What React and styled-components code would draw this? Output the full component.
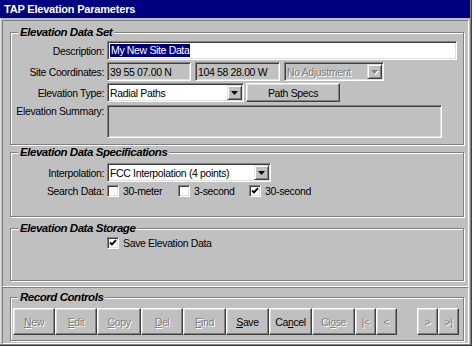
import React from "react";
import styled, { createGlobalStyle } from "styled-components";

const GlobalStyle = createGlobalStyle`
  html, body {
    margin: 0;
    padding: 0;
    background: #ffffff;
  }
  body {
    font-family: "Liberation Sans", Arial, sans-serif;
  }
`;

const Window = styled.div`
  width: 472px;
  height: 346px;
  box-sizing: border-box;
  background: #c0c0c0;
  border-right: 1px solid #404040;
  border-bottom: 1px solid #404040;
  box-shadow: inset -1px -1px 0 #808080, inset 1px 0 0 #dfdfdf;
  display: flex;
  flex-direction: column;
`;

const TitleBar = styled.div`
  height: 18px;
  flex: none;
  background: #000080;
  color: #ffffff;
  font-weight: bold;
  font-size: 11px;
  letter-spacing: -0.2px;
  display: flex;
  align-items: center;
  padding-left: 4px;
  margin-right: 1px;
`;

const Body = styled.div`
  flex: 1;
  padding: 2px 2px 1px 2px;
  display: flex;
  flex-direction: column;
`;

const Panel = styled.div`
  box-sizing: border-box;
  height: ${(p) => p.$h}px;
  border: 1px solid;
  border-color: #808080 #ffffff #ffffff #808080;
  padding: 0 4px 0 7px;
  display: flex;
  flex-direction: column;
`;

const Group = styled.div`
  position: relative;
  box-sizing: border-box;
  height: ${(p) => p.$h}px;
  margin-top: ${(p) => p.$mt}px;
  border: 1px solid #808080;
  box-shadow: inset 1px 1px 0 #ffffff, 1px 1px 0 #ffffff;
  padding-top: ${(p) => p.$pt}px;
`;

const Legend = styled.span`
  position: absolute;
  top: -7px;
  left: 7px;
  padding: 0 2px;
  background: #c0c0c0;
  font-weight: bold;
  font-style: italic;
  font-size: 11.5px;
  letter-spacing: -0.45px;
  line-height: 12px;
  color: #000000;
  white-space: nowrap;
`;

const Form = styled.div`
  display: grid;
  grid-template-columns: 93px auto;
  column-gap: 3px;
  row-gap: ${(p) => p.$gap ?? 2}px;
  align-items: center;
`;

const Label = styled.div`
  font-size: 10.5px;
  letter-spacing: -0.35px;
  text-align: right;
  white-space: nowrap;
  color: #000000;
  align-self: ${(p) => (p.$top ? "start" : "center")};
  padding-top: ${(p) => (p.$top ? 1 : 0)}px;
`;

const Row = styled.div`
  display: flex;
  align-items: center;
  gap: ${(p) => p.$gap ?? 4}px;
`;

const Field = styled.div`
  box-sizing: border-box;
  width: ${(p) => p.$w}px;
  height: ${(p) => p.$h ?? 19}px;
  margin-top: ${(p) => p.$mt ?? 0}px;
  background: ${(p) => (p.$readonly ? "#c0c0c0" : "#ffffff")};
  border: 1px solid;
  border-color: #808080 #ffffff #ffffff #808080;
  box-shadow: inset 1px 1px 0 #404040, inset -1px -1px 0 #dfdfdf;
  padding: 0 1px 0 2px;
  font-size: 10.5px;
  letter-spacing: -0.35px;
  display: flex;
  align-items: center;
  color: ${(p) => (p.$disabled ? "#808080" : "#000000")};
  text-shadow: ${(p) => (p.$disabled ? "1px 1px 0 #ffffff" : "none")};
  white-space: nowrap;
  overflow: hidden;
`;

const Selected = styled.span`
  background: #000080;
  color: #ffffff;
  padding: 0 1px;
  line-height: 13px;
`;

const DropButton = styled.div`
  margin-left: auto;
  flex: none;
  width: 15px;
  height: 15px;
  box-sizing: border-box;
  background: #c0c0c0;
  border: 1px solid;
  border-color: #dfdfdf #404040 #404040 #dfdfdf;
  box-shadow: inset 1px 1px 0 #ffffff, inset -1px -1px 0 #808080;
  display: flex;
  align-items: center;
  justify-content: center;
`;

const Button = styled.button`
  box-sizing: border-box;
  flex: none;
  width: ${(p) => p.$w}px;
  height: ${(p) => p.$h ?? 27}px;
  margin-left: ${(p) => p.$gap ?? 0}px;
  background: #c0c0c0;
  border: 1px solid;
  border-color: #ffffff #404040 #404040 #ffffff;
  box-shadow: inset -1px -1px 0 #808080, inset 1px 1px 0 #dfdfdf;
  font-family: inherit;
  font-size: 10.5px;
  letter-spacing: -0.35px;
  padding: 0;
  color: ${(p) => (p.disabled ? "#808080" : "#000000")};
  text-shadow: ${(p) => (p.disabled ? "1px 1px 0 #ffffff" : "none")};
  cursor: default;

  u {
    text-underline-offset: 1px;
  }
`;

const CheckItem = styled.label`
  display: flex;
  align-items: center;
  gap: 4px;
  width: ${(p) => p.$w ?? 71}px;
  font-size: 10.5px;
  letter-spacing: -0.35px;
  color: #000000;
`;

const Box = styled.span`
  width: 12px;
  height: 12px;
  flex: none;
  box-sizing: border-box;
  background: #ffffff;
  border: 1px solid;
  border-color: #808080 #ffffff #ffffff #808080;
  box-shadow: inset 1px 1px 0 #404040, inset -1px -1px 0 #dfdfdf;
  display: flex;
  align-items: center;
  justify-content: center;
`;

const ButtonBar = styled.div`
  display: flex;
  padding-left: 2px;
`;

const Arrow = ({ disabled }) => (
  <svg width="7" height="4" viewBox="0 0 7 4" style={{ overflow: "visible" }}>
    {disabled && <polygon points="1,1 8,1 4.5,5" fill="#ffffff" />}
    <polygon points="0,0 7,0 3.5,4" fill={disabled ? "#808080" : "#000000"} />
  </svg>
);

const Select = ({ w, value, disabled }) => (
  <Field $w={w} $disabled={disabled} $readonly={disabled}>
    {value}
    <DropButton>
      <Arrow disabled={disabled} />
    </DropButton>
  </Field>
);

const Check = ({ checked, label, w }) => (
  <CheckItem $w={w}>
    <Box>
      {checked && (
        <svg width="8" height="8" viewBox="0 0 8 8">
          <polyline points="1,3.5 3,5.5 7,1.2" fill="none" stroke="#000" strokeWidth="1.9" />
        </svg>
      )}
    </Box>
    {label}
  </CheckItem>
);

const records = [
  { w: 42, text: "New", u: 0, disabled: true },
  { w: 42, text: "Edit", u: 0, disabled: true },
  { w: 44, text: "Copy", u: 0, disabled: true },
  { w: 42, text: "Del", u: 0, disabled: true },
  { w: 43, text: "Find", u: 0, disabled: true },
  { w: 43, text: "Save", u: 0, disabled: false },
  { w: 43, text: "Cancel", u: 2, disabled: false },
  { w: 43, text: "Close", u: 2, disabled: true },
  { w: 21, text: "|<", disabled: true },
  { w: 21, text: "<", disabled: true },
  { w: 21, text: ">", disabled: true, gap: 20 },
  { w: 21, text: ">|", disabled: true },
];

const Mnemonic = ({ text, u }) => {
  if (u === undefined) return text;
  return (
    <>
      {text.slice(0, u)}
      <u>{text[u]}</u>
      {text.slice(u + 1)}
    </>
  );
};

export default function App() {
  return (
    <>
      <GlobalStyle />
      <Window>
        <TitleBar>TAP Elevation Parameters</TitleBar>
        <Body>
          <Panel $h={267}>
            <Group $h={113} $mt={11} $pt={8}>
              <Legend>Elevation Data Set</Legend>
              <Form>
                <Label>Description:</Label>
                <Field $w={350}>
                  <Selected>My New Site Data</Selected>
                </Field>

                <Label>Site Coordinates:</Label>
                <Row>
                  <Field $w={84} $readonly>
                    39 55 07.00 N
                  </Field>
                  <Field $w={85} $readonly>
                    104 58 28.00 W
                  </Field>
                  <Select w={100} value="No Adjustment" disabled />
                </Row>

                <Label>Elevation Type:</Label>
                <Row $gap={2}>
                  <Select w={137} value="Radial Paths" />
                  <Button $w={94} $h={19}>
                    Path Specs
                  </Button>
                </Row>

                <Label $top>Elevation Summary:</Label>
                <Field $w={335} $h={33} $mt={1} $readonly />
              </Form>
            </Group>

            <Group $h={65} $mt={7} $pt={10}>
              <Legend>Elevation Data Specifications</Legend>
              <Form $gap={3}>
                <Label>Interpolation:</Label>
                <Select w={164} value="FCC Interpolation (4 points)" />

                <Label>Search Data:</Label>
                <Row $gap={0}>
                  <Check label="30-meter" />
                  <Check label="3-second" />
                  <Check label="30-second" checked />
                </Row>
              </Form>
            </Group>

            <Group $h={53} $mt={11} $pt={8}>
              <Legend>Elevation Data Storage</Legend>
              <Form>
                <span />
                <Check label="Save Elevation Data" checked w={160} />
              </Form>
            </Group>
          </Panel>

          <Panel $h={57}>
            <Group $h={44} $mt={9} $pt={10}>
              <Legend>Record Controls</Legend>
              <ButtonBar>
                {records.map((r) => (
                  <Button key={r.text} $w={r.w} $gap={r.gap} disabled={r.disabled}>
                    <Mnemonic text={r.text} u={r.u} />
                  </Button>
                ))}
              </ButtonBar>
            </Group>
          </Panel>
        </Body>
      </Window>
    </>
  );
}
